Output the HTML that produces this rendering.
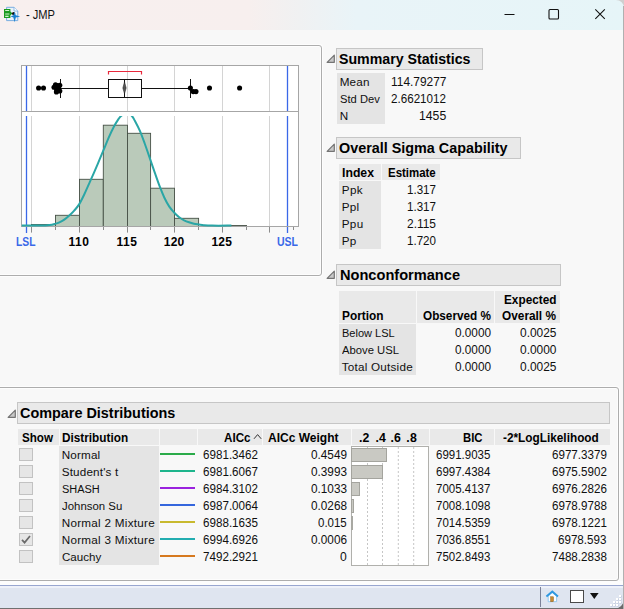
<!DOCTYPE html><html><head><meta charset="utf-8"><title>JMP</title><style>html,body{margin:0;padding:0}body{width:624px;height:609px;overflow:hidden;background:#f8f8f8;position:relative;font-family:"Liberation Sans",sans-serif}
.b{position:absolute;display:block}.t{position:absolute;white-space:nowrap;line-height:16px;transform-origin:left center}</style></head><body><div class="b" style="left:0px;top:0px;width:624px;height:30px;background:linear-gradient(90deg,#f8efee 0%,#f7efee 40%,#f0f1f2 48%,#e9f4f8 57%,#e6f5f8 100%);"></div><div class="b" style="left:-5px;top:45px;width:327px;height:231px;border:1px solid #adadad;box-sizing:border-box;border-radius:3px;box-shadow:0 0 0 1px #fdfdfd,inset 0 0 0 1px #fdfdfd;"></div><div class="b" style="left:-5px;top:387px;width:624px;height:194px;border:1px solid #adadad;box-sizing:border-box;border-radius:3px;box-shadow:0 0 0 1px #fdfdfd,inset 0 0 0 1px #fdfdfd;"></div><div class="b" style="left:336px;top:48px;width:147px;height:22px;background:#e9e9e9;border:1px solid #c6c6c6;box-sizing:border-box;"></div><div class="b" style="left:336px;top:137px;width:185px;height:22px;background:#e9e9e9;border:1px solid #c6c6c6;box-sizing:border-box;"></div><div class="b" style="left:336px;top:264px;width:225px;height:22px;background:#e9e9e9;border:1px solid #c6c6c6;box-sizing:border-box;"></div><div class="b" style="left:17px;top:402px;width:593.3px;height:22px;background:#e9e9e9;border:1px solid #c6c6c6;box-sizing:border-box;"></div><div class="b" style="left:337px;top:73px;width:48px;height:51px;background:#e4e4e4;"></div><div class="b" style="left:339px;top:164px;width:42px;height:16px;background:#e9e9e9;"></div><div class="b" style="left:382px;top:164px;width:58px;height:16px;background:#e9e9e9;"></div><div class="b" style="left:339px;top:181px;width:42px;height:68px;background:#e4e4e4;"></div><div class="b" style="left:339px;top:291px;width:76.5px;height:32px;background:#e9e9e9;"></div><div class="b" style="left:417px;top:291px;width:76.5px;height:32px;background:#e9e9e9;"></div><div class="b" style="left:495px;top:291px;width:64.5px;height:32px;background:#e9e9e9;"></div><div class="b" style="left:339px;top:324px;width:76.5px;height:51px;background:#e4e4e4;"></div><div class="b" style="left:18px;top:429px;width:41px;height:16px;background:#e9e9e9;"></div><div class="b" style="left:60px;top:429px;width:99px;height:16px;background:#e9e9e9;"></div><div class="b" style="left:160px;top:429px;width:37px;height:16px;background:#e9e9e9;"></div><div class="b" style="left:198px;top:429px;width:64px;height:16px;background:#e9e9e9;"></div><div class="b" style="left:263px;top:429px;width:88px;height:16px;background:#e9e9e9;"></div><div class="b" style="left:352px;top:429px;width:77px;height:16px;background:#e9e9e9;"></div><div class="b" style="left:430px;top:429px;width:63.5px;height:16px;background:#e9e9e9;"></div><div class="b" style="left:495px;top:429px;width:115px;height:16px;background:#e9e9e9;"></div><div class="b" style="left:59px;top:446px;width:100px;height:119px;background:#e4e4e4;"></div><svg class="b" style="left:253px;top:432px" width="10" height="10"><path d="M1 6.8 L4.6 2.6 L8.2 6.8" fill="none" stroke="#333" stroke-width="1"/></svg><div class="b" style="left:351px;top:446px;width:78px;height:119.5px;background:#fff;border:1px solid #b0b0ac;box-sizing:border-box;"></div><svg class="b" style="left:351px;top:447px" width="78" height="118"><path d="M16.5 0 V118" stroke="#c6c6c6" stroke-width="1" stroke-dasharray="2 2"/><path d="M31.5 0 V118" stroke="#c6c6c6" stroke-width="1" stroke-dasharray="2 2"/><path d="M47.3 0 V118" stroke="#c6c6c6" stroke-width="1" stroke-dasharray="2 2"/><path d="M62.7 0 V118" stroke="#c6c6c6" stroke-width="1" stroke-dasharray="2 2"/></svg><div class="b" style="left:19px;top:448.0px;width:14px;height:13px;background:#e6e6e6;border:1px solid #c2c2c2;box-sizing:border-box;"></div><div class="b" style="left:160px;top:453.3px;width:35px;height:2.2px;background:#2bab4a;"></div><div class="b" style="left:351px;top:448.0px;width:36.027300000000004px;height:13.5px;background:#c9c9c3;border:1px solid #a4a49e;box-sizing:border-box;"></div><div class="b" style="left:19px;top:465.0px;width:14px;height:13px;background:#e6e6e6;border:1px solid #c2c2c2;box-sizing:border-box;"></div><div class="b" style="left:160px;top:470.3px;width:35px;height:2.2px;background:#1eb58c;"></div><div class="b" style="left:351px;top:465.0px;width:31.7461px;height:13.5px;background:#c9c9c3;border:1px solid #a4a49e;box-sizing:border-box;"></div><div class="b" style="left:19px;top:482.0px;width:14px;height:13px;background:#e6e6e6;border:1px solid #c2c2c2;box-sizing:border-box;"></div><div class="b" style="left:160px;top:487.3px;width:35px;height:2.2px;background:#9a22de;"></div><div class="b" style="left:351px;top:482.0px;width:8.9541px;height:13.5px;background:#c9c9c3;border:1px solid #a4a49e;box-sizing:border-box;"></div><div class="b" style="left:19px;top:499.0px;width:14px;height:13px;background:#e6e6e6;border:1px solid #c2c2c2;box-sizing:border-box;"></div><div class="b" style="left:160px;top:504.3px;width:35px;height:2.2px;background:#3566dd;"></div><div class="b" style="left:351px;top:499.0px;width:3.0636px;height:13.5px;background:#c9c9c3;border:1px solid #a4a49e;box-sizing:border-box;"></div><div class="b" style="left:19px;top:516.0px;width:14px;height:13px;background:#e6e6e6;border:1px solid #c2c2c2;box-sizing:border-box;"></div><div class="b" style="left:160px;top:521.3px;width:35px;height:2.2px;background:#c8b92e;"></div><div class="b" style="left:351px;top:516.0px;width:1.955px;height:13.5px;background:#a8a8a2;"></div><div class="b" style="left:19px;top:533.0px;width:14px;height:13px;background:#e6e6e6;border:1px solid #c2c2c2;box-sizing:border-box;"></div><div class="b" style="left:160px;top:538.3px;width:35px;height:2.2px;background:#22adb0;"></div><div class="b" style="left:19px;top:550.0px;width:14px;height:13px;background:#e6e6e6;border:1px solid #c2c2c2;box-sizing:border-box;"></div><div class="b" style="left:160px;top:555.3px;width:35px;height:2.2px;background:#d6791f;"></div><svg class="b" style="left:19px;top:532.5px" width="14" height="13" viewBox="0 0 14 13"><path d="M3 6.8 L5.6 9.6 L11 3" fill="none" stroke="#6a6a6a" stroke-width="1.7"/></svg><div class="b" style="left:0px;top:581px;width:624px;height:4px;background:#fdfdfd;"></div><div class="b" style="left:0px;top:585px;width:624px;height:1px;background:#98a6d0;"></div><div class="b" style="left:0px;top:586px;width:624px;height:22px;background:#dfe5f0;"></div><div class="b" style="left:0px;top:586px;width:624px;height:1.5px;background:#eef1f9;"></div><div class="b" style="left:0px;top:608px;width:624px;height:1px;background:#707070;"></div><div class="b" style="left:540px;top:587px;width:1px;height:20px;background:#7c8298;"></div><div class="b" style="left:570px;top:590px;width:14px;height:13px;background:#fff;border:1px solid #4a4a4a;box-sizing:border-box;"></div><svg class="b" style="left:589px;top:592px" width="11" height="8"><path d="M1 1 H9.6 L5.3 7 Z" fill="#111"/></svg><svg class="b" style="left:544px;top:588px" width="17" height="16" viewBox="0 0 17 16">
<path d="M4.2 8 L8.2 4.6 L12.6 8 V13.7 H4.2 Z" fill="#fbfdff" stroke="#8cc4ec" stroke-width="0.9"/>
<path d="M2.4 8.4 L8.3 3.6 L14 8.4" fill="none" stroke="#2e98e0" stroke-width="1.9" stroke-linejoin="miter"/>
<rect x="6.7" y="8.8" width="2.7" height="4.9" fill="#c88a30" stroke="#8a5a14" stroke-width="0.5"/></svg><svg class="b" style="left:609px;top:594px" width="14" height="14"><rect x="10.6" y="1.6" width="2" height="2" fill="#bcc4d8"/><rect x="10" y="1" width="2" height="2" fill="#fff"/><rect x="7.6" y="4.6" width="2" height="2" fill="#bcc4d8"/><rect x="7" y="4" width="2" height="2" fill="#fff"/><rect x="10.6" y="4.6" width="2" height="2" fill="#bcc4d8"/><rect x="10" y="4" width="2" height="2" fill="#fff"/><rect x="4.6" y="7.6" width="2" height="2" fill="#bcc4d8"/><rect x="4" y="7" width="2" height="2" fill="#fff"/><rect x="7.6" y="7.6" width="2" height="2" fill="#bcc4d8"/><rect x="7" y="7" width="2" height="2" fill="#fff"/><rect x="10.6" y="7.6" width="2" height="2" fill="#bcc4d8"/><rect x="10" y="7" width="2" height="2" fill="#fff"/><rect x="1.6" y="10.6" width="2" height="2" fill="#bcc4d8"/><rect x="1" y="10" width="2" height="2" fill="#fff"/><rect x="4.6" y="10.6" width="2" height="2" fill="#bcc4d8"/><rect x="4" y="10" width="2" height="2" fill="#fff"/><rect x="7.6" y="10.6" width="2" height="2" fill="#bcc4d8"/><rect x="7" y="10" width="2" height="2" fill="#fff"/></svg><svg class="b" style="left:614px;top:599px" width="10" height="10"><path d="M10 0 V10 H0 A10 10 0 0 0 10 0 Z" fill="#6a6a6a"/></svg><svg class="b" style="left:325px;top:53px" width="11" height="11"><path d="M9.3 2.1 V9.3 H2.1 Z" fill="#c8c8c8" stroke="#747474" stroke-width="1.2" stroke-linejoin="round"/></svg><svg class="b" style="left:325px;top:142px" width="11" height="11"><path d="M9.3 2.1 V9.3 H2.1 Z" fill="#c8c8c8" stroke="#747474" stroke-width="1.2" stroke-linejoin="round"/></svg><svg class="b" style="left:325px;top:269px" width="11" height="11"><path d="M9.3 2.1 V9.3 H2.1 Z" fill="#c8c8c8" stroke="#747474" stroke-width="1.2" stroke-linejoin="round"/></svg><svg class="b" style="left:6px;top:407.7px" width="11" height="11"><path d="M9.3 2.1 V9.3 H2.1 Z" fill="#c8c8c8" stroke="#747474" stroke-width="1.2" stroke-linejoin="round"/></svg><svg class="b" style="left:500px;top:5px" width="112" height="20">
<path d="M4.5 9.5 H14.5" stroke="#111" stroke-width="1"/>
<rect x="49" y="4.5" width="9.5" height="9.5" rx="1" fill="none" stroke="#111" stroke-width="1.1"/>
<path d="M95.3 4.4 L104.8 13.9 M104.8 4.4 L95.3 13.9" stroke="#111" stroke-width="1.1"/></svg><svg class="b" style="left:612px;top:0" width="12" height="12"><path d="M12 0 H4 A8 8 0 0 1 12 8 Z" fill="#cfcfcf"/></svg><div class="b" style="left:623px;top:6px;width:1px;height:603px;background:#b0b0b0;"></div><svg class="b" style="left:0;top:0" width="24" height="24" viewBox="0 0 24 24">
<path d="M6.6 7.3 H14 L17.8 11 V20.6 H6.6 Z" fill="#eaf2fa" stroke="#7aaee0" stroke-width="1"/>
<path d="M14 7.3 V11 H17.8" fill="#fafcff" stroke="#7aaee0" stroke-width="0.8"/>
<path d="M4 9 H10.4 V11.6 L12.6 13.4 L10.4 15.3 V17.9 H4 Z" fill="#1a9a1e"/>
<path d="M5.2 10.5 H9.2 M5.2 14 H9.4 M5.2 16.4 H8.6" stroke="#d4f2cc" stroke-width="1.1"/>
<circle cx="13.5" cy="13.5" r="1.6" fill="#111"/>
<path d="M14.6 12 L15.8 15.2 L20.2 16.4 L15.8 17.6 L14.6 22.2 L13.4 17.6 L10.6 16.4 L13.4 15.2 Z" fill="#1a80d0"/></svg><svg class="b" style="left:0;top:0" width="330" height="260" viewBox="0 0 330 260"><rect x="21.5" y="65.5" width="277" height="161" fill="#fff" stroke="#a6a6a6" stroke-width="1"/><path d="M31.5 66 V111 M31.5 116 V226" stroke="#d4d4d4" stroke-width="1"/><path d="M79.5 66 V111 M79.5 116 V226" stroke="#d4d4d4" stroke-width="1"/><path d="M127.5 66 V111 M127.5 116 V226" stroke="#d4d4d4" stroke-width="1"/><path d="M174.5 66 V111 M174.5 116 V226" stroke="#d4d4d4" stroke-width="1"/><path d="M222.5 66 V111 M222.5 116 V226" stroke="#d4d4d4" stroke-width="1"/><path d="M269.5 66 V111 M269.5 116 V226" stroke="#d4d4d4" stroke-width="1"/><path d="M21 111.5 H299" stroke="#a6a6a6" stroke-width="1"/><path d="M26.5 66 V111 M26.5 116 V233" stroke="#3a68e8" stroke-width="1.3"/><path d="M287.5 66 V111 M287.5 116 V233" stroke="#3a68e8" stroke-width="1.3"/><rect x="31.5" y="224.5" width="24.0" height="2.0" fill="#bacaba" stroke="#465046" stroke-width="0.9"/><rect x="55.5" y="215.3" width="24.0" height="11.199999999999989" fill="#bacaba" stroke="#465046" stroke-width="0.9"/><rect x="79.5" y="179.3" width="23.799999999999997" height="47.19999999999999" fill="#bacaba" stroke="#465046" stroke-width="0.9"/><rect x="103.3" y="125.2" width="24.200000000000003" height="101.3" fill="#bacaba" stroke="#465046" stroke-width="0.9"/><rect x="127.5" y="133.3" width="23.099999999999994" height="93.19999999999999" fill="#bacaba" stroke="#465046" stroke-width="0.9"/><rect x="150.6" y="188.2" width="23.900000000000006" height="38.30000000000001" fill="#bacaba" stroke="#465046" stroke-width="0.9"/><rect x="174.5" y="218.3" width="24.099999999999994" height="8.199999999999989" fill="#bacaba" stroke="#465046" stroke-width="0.9"/><rect x="222.5" y="225.5" width="24.0" height="1.0" fill="#bacaba" stroke="#465046" stroke-width="0.9"/><path d="M21 226.5 H299" stroke="#a6a6a6" stroke-width="1"/><path d="M31.5 227 V232.6" stroke="#8c8c8c" stroke-width="1"/><path d="M79.5 227 V232.6" stroke="#8c8c8c" stroke-width="1"/><path d="M127.5 227 V232.6" stroke="#8c8c8c" stroke-width="1"/><path d="M174.5 227 V232.6" stroke="#8c8c8c" stroke-width="1"/><path d="M222.5 227 V232.6" stroke="#8c8c8c" stroke-width="1"/><path d="M269.5 227 V232.6" stroke="#8c8c8c" stroke-width="1"/><path d="M55.5 227 V230" stroke="#8c8c8c" stroke-width="1"/><path d="M103.5 227 V230" stroke="#8c8c8c" stroke-width="1"/><path d="M150.5 227 V230" stroke="#8c8c8c" stroke-width="1"/><path d="M198.5 227 V230" stroke="#8c8c8c" stroke-width="1"/><path d="M246.5 227 V230" stroke="#8c8c8c" stroke-width="1"/><path d="M293.5 227 V230" stroke="#8c8c8c" stroke-width="1"/><clipPath id="cp"><rect x="21.5" y="116" width="277.5" height="112"/></clipPath><path clip-path="url(#cp)" d="M21.5 225.6 C23.75 225.60 31.08 225.62 35 225.6 C38.92 225.58 42.57 225.58 45 225.5 C47.43 225.42 48.02 225.35 49.6 225.1 C51.18 224.85 52.87 224.45 54.5 224.0 C56.13 223.55 57.77 223.13 59.4 222.4 C61.03 221.67 62.65 220.75 64.3 219.6 C65.95 218.45 67.65 217.00 69.3 215.5 C70.95 214.00 72.57 212.45 74.2 210.6 C75.83 208.75 77.47 207.00 79.1 204.4 C80.73 201.80 82.35 198.42 84 195.0 C85.65 191.58 87.35 187.60 89 183.9 C90.65 180.20 92.25 176.58 93.9 172.8 C95.55 169.02 97.25 165.10 98.9 161.2 C100.55 157.30 102.17 153.33 103.8 149.4 C105.43 145.47 107.07 141.30 108.7 137.6 C110.33 133.90 111.95 130.32 113.6 127.2 C115.25 124.08 117.35 120.77 118.6 118.9 C119.85 117.03 119.78 117.05 121.1 116.0 C122.42 114.95 124.70 112.60 126.5 112.6 C128.30 112.60 130.51 114.63 131.9 116.0 C133.29 117.37 133.53 118.35 134.85 120.8 C136.17 123.25 138.16 126.92 139.8 130.7 C141.44 134.48 142.97 138.73 144.7 143.5 C146.43 148.27 148.55 154.53 150.2 159.3 C151.85 164.07 153.05 167.67 154.6 172.1 C156.15 176.53 157.87 181.63 159.5 185.9 C161.13 190.17 162.77 194.25 164.4 197.7 C166.03 201.15 167.65 204.10 169.3 206.6 C170.95 209.10 172.65 210.92 174.3 212.7 C175.95 214.48 177.57 216.03 179.2 217.3 C180.83 218.57 182.47 219.47 184.1 220.3 C185.73 221.13 187.35 221.73 189 222.3 C190.65 222.87 192.35 223.33 194 223.7 C195.65 224.07 197.27 224.25 198.9 224.5 C200.53 224.75 201.62 225.02 203.8 225.2 C205.98 225.38 207.40 225.53 212 225.6 C216.60 225.67 228.17 225.60 231.4 225.6" fill="none" stroke="#2aa6a6" stroke-width="2" stroke-linejoin="round"/><path d="M60.5 88.5 H108.5 M141.5 88.5 H190.5 M60.5 79 V98 M190.5 79 V98" stroke="#111" stroke-width="1"/><rect x="108.5" y="79.5" width="33" height="18" fill="none" stroke="#111" stroke-width="1"/><path d="M124.5 79.5 V97.5" stroke="#111" stroke-width="1"/><path d="M124.5 81.8 L126.2 88 L124.5 93.8 L122.8 88 Z" fill="#555" stroke="#222" stroke-width="0.5"/><path d="M108.5 74.5 V71.5 H141.5 V74.5" fill="none" stroke="#e8283c" stroke-width="1.2"/><circle cx="38.6" cy="88" r="2.55" fill="#000"/><circle cx="43.5" cy="88" r="2.55" fill="#000"/><circle cx="55.5" cy="84.8" r="2.55" fill="#000"/><circle cx="54" cy="87.2" r="2.55" fill="#000"/><circle cx="56.4" cy="92" r="2.55" fill="#000"/><circle cx="59.8" cy="85.2" r="2.55" fill="#000"/><circle cx="59.8" cy="91" r="2.55" fill="#000"/><circle cx="57.6" cy="88" r="2.55" fill="#000"/><circle cx="57" cy="85.6" r="2.55" fill="#000"/><circle cx="56.6" cy="90" r="2.55" fill="#000"/><circle cx="58.6" cy="88.4" r="2.55" fill="#000"/><circle cx="190.4" cy="88" r="2.55" fill="#000"/><circle cx="193.2" cy="91.6" r="2.55" fill="#000"/><circle cx="196" cy="91.6" r="2.55" fill="#000"/><circle cx="209.5" cy="88" r="2.55" fill="#000"/><circle cx="239.6" cy="88" r="2.55" fill="#000"/></svg><span class="t" style="left:26.20px;top:6.74px;font-size:12.3px;font-weight:400;color:#111;letter-spacing:0.000px;transform:scaleX(0.9032);">- JMP</span><span class="t" style="left:338.70px;top:50.98px;font-size:15.4px;font-weight:700;color:#000;letter-spacing:0.000px;transform:scaleX(0.9205);">Summary Statistics</span><span class="t" style="left:338.70px;top:139.98px;font-size:15.4px;font-weight:700;color:#000;letter-spacing:0.000px;transform:scaleX(0.9336);">Overall Sigma Capability</span><span class="t" style="left:339.70px;top:266.98px;font-size:15.4px;font-weight:700;color:#000;letter-spacing:0.000px;transform:scaleX(0.9481);">Nonconformance</span><span class="t" style="left:19.90px;top:404.98px;font-size:15.4px;font-weight:700;color:#000;letter-spacing:0.000px;transform:scaleX(0.9361);">Compare Distributions</span><span class="t" style="left:339.70px;top:73.88px;font-size:11.7px;font-weight:400;color:#101010;letter-spacing:0.167px;transform:scaleX(1.0000);">Mean</span><span class="t" style="left:390.95px;top:73.89px;font-size:12.3px;font-weight:400;color:#101010;letter-spacing:0.000px;transform:scaleX(0.9700);">114.79277</span><span class="t" style="left:339.70px;top:90.88px;font-size:11.7px;font-weight:400;color:#101010;letter-spacing:0.000px;transform:scaleX(0.9560);">Std Dev</span><span class="t" style="left:391.45px;top:90.89px;font-size:12.3px;font-weight:400;color:#101010;letter-spacing:0.000px;transform:scaleX(0.9460);">2.6621012</span><span class="t" style="left:339.70px;top:107.88px;font-size:11.7px;font-weight:400;color:#101010;letter-spacing:0.000px;transform:scaleX(1.0000);">N</span><span class="t" style="left:419.20px;top:107.89px;font-size:12.3px;font-weight:400;color:#101010;letter-spacing:0.000px;transform:scaleX(0.9960);">1455</span><span class="t" style="left:341.70px;top:165.14px;font-size:12.3px;font-weight:700;color:#000;letter-spacing:0.000px;transform:scaleX(0.9961);">Index</span><span class="t" style="left:387.95px;top:165.14px;font-size:12.3px;font-weight:700;color:#000;letter-spacing:0.000px;transform:scaleX(0.9314);">Estimate</span><span class="t" style="left:341.70px;top:181.73px;font-size:11.7px;font-weight:400;color:#101010;letter-spacing:0.430px;transform:scaleX(1.0000);">Ppk</span><span class="t" style="left:407.20px;top:181.74px;font-size:12.3px;font-weight:400;color:#101010;letter-spacing:0.000px;transform:scaleX(0.9421);">1.317</span><span class="t" style="left:341.70px;top:198.73px;font-size:11.7px;font-weight:400;color:#101010;letter-spacing:0.297px;transform:scaleX(1.0000);">Ppl</span><span class="t" style="left:407.20px;top:198.74px;font-size:12.3px;font-weight:400;color:#101010;letter-spacing:0.000px;transform:scaleX(0.9421);">1.317</span><span class="t" style="left:341.70px;top:215.73px;font-size:11.7px;font-weight:400;color:#101010;letter-spacing:0.352px;transform:scaleX(1.0000);">Ppu</span><span class="t" style="left:407.20px;top:215.74px;font-size:12.3px;font-weight:400;color:#101010;letter-spacing:0.000px;transform:scaleX(0.9712);">2.115</span><span class="t" style="left:341.70px;top:232.73px;font-size:11.7px;font-weight:400;color:#101010;letter-spacing:0.203px;transform:scaleX(1.0000);">Pp</span><span class="t" style="left:407.20px;top:232.74px;font-size:12.3px;font-weight:400;color:#101010;letter-spacing:0.000px;transform:scaleX(0.9421);">1.720</span><span class="t" style="left:341.70px;top:307.84px;font-size:12.3px;font-weight:700;color:#000;letter-spacing:0.000px;transform:scaleX(0.9641);">Portion</span><span class="t" style="left:422.70px;top:307.84px;font-size:12.3px;font-weight:700;color:#000;letter-spacing:0.000px;transform:scaleX(0.9565);">Observed %</span><span class="t" style="left:503.70px;top:292.14px;font-size:12.3px;font-weight:700;color:#000;letter-spacing:0.000px;transform:scaleX(0.9600);">Expected</span><span class="t" style="left:502.20px;top:307.84px;font-size:12.3px;font-weight:700;color:#000;letter-spacing:0.000px;transform:scaleX(0.9632);">Overall %</span><span class="t" style="left:341.70px;top:324.63px;font-size:11.7px;font-weight:400;color:#101010;letter-spacing:0.000px;transform:scaleX(0.9438);">Below LSL</span><span class="t" style="left:454.70px;top:324.64px;font-size:12.3px;font-weight:400;color:#101010;letter-spacing:0.000px;transform:scaleX(0.9568);">0.0000</span><span class="t" style="left:519.70px;top:324.64px;font-size:12.3px;font-weight:400;color:#101010;letter-spacing:0.000px;transform:scaleX(0.9701);">0.0025</span><span class="t" style="left:341.70px;top:341.63px;font-size:11.7px;font-weight:400;color:#101010;letter-spacing:0.000px;transform:scaleX(0.9641);">Above USL</span><span class="t" style="left:454.70px;top:341.64px;font-size:12.3px;font-weight:400;color:#101010;letter-spacing:0.000px;transform:scaleX(0.9568);">0.0000</span><span class="t" style="left:519.70px;top:341.64px;font-size:12.3px;font-weight:400;color:#101010;letter-spacing:0.000px;transform:scaleX(0.9701);">0.0000</span><span class="t" style="left:341.70px;top:358.63px;font-size:11.7px;font-weight:400;color:#101010;letter-spacing:0.232px;transform:scaleX(1.0000);">Total Outside</span><span class="t" style="left:454.70px;top:358.64px;font-size:12.3px;font-weight:400;color:#101010;letter-spacing:0.000px;transform:scaleX(0.9568);">0.0000</span><span class="t" style="left:519.70px;top:358.64px;font-size:12.3px;font-weight:400;color:#101010;letter-spacing:0.000px;transform:scaleX(0.9701);">0.0025</span><span class="t" style="left:21.50px;top:429.74px;font-size:12.3px;font-weight:700;color:#000;letter-spacing:0.000px;transform:scaleX(0.9452);">Show</span><span class="t" style="left:61.80px;top:429.74px;font-size:12.3px;font-weight:700;color:#000;letter-spacing:0.000px;transform:scaleX(0.9580);">Distribution</span><span class="t" style="left:224.20px;top:429.74px;font-size:12.3px;font-weight:700;color:#000;letter-spacing:0.000px;transform:scaleX(0.9454);">AICc</span><span class="t" style="left:268.45px;top:429.74px;font-size:12.3px;font-weight:700;color:#000;letter-spacing:0.000px;transform:scaleX(0.9764);">AICc Weight</span><span class="t" style="left:359.20px;top:429.74px;font-size:12.3px;font-weight:700;color:#000;letter-spacing:0.000px;transform:scaleX(0.9985);">.2</span><span class="t" style="left:375.45px;top:429.74px;font-size:12.3px;font-weight:700;color:#000;letter-spacing:0.234px;transform:scaleX(1.0000);">.4</span><span class="t" style="left:390.45px;top:429.74px;font-size:12.3px;font-weight:700;color:#000;letter-spacing:0.234px;transform:scaleX(1.0000);">.6</span><span class="t" style="left:406.20px;top:429.74px;font-size:12.3px;font-weight:700;color:#000;letter-spacing:0.484px;transform:scaleX(1.0000);">.8</span><span class="t" style="left:462.70px;top:429.74px;font-size:12.3px;font-weight:700;color:#000;letter-spacing:0.000px;transform:scaleX(0.9204);">BIC</span><span class="t" style="left:502.60px;top:429.74px;font-size:12.3px;font-weight:700;color:#000;letter-spacing:0.000px;transform:scaleX(0.9604);">-2*LogLikelihood</span><span class="t" style="left:61.70px;top:446.63px;font-size:11.7px;font-weight:400;color:#101010;letter-spacing:0.166px;transform:scaleX(1.0000);">Normal</span><span class="t" style="left:203.45px;top:446.64px;font-size:12.3px;font-weight:400;color:#101010;letter-spacing:0.000px;transform:scaleX(0.9460);">6981.3462</span><span class="t" style="left:311.20px;top:446.64px;font-size:12.3px;font-weight:400;color:#101010;letter-spacing:0.000px;transform:scaleX(0.9568);">0.4549</span><span class="t" style="left:435.50px;top:446.64px;font-size:12.3px;font-weight:400;color:#101010;letter-spacing:0.000px;transform:scaleX(0.9339);">6991.9035</span><span class="t" style="left:551.60px;top:446.64px;font-size:12.3px;font-weight:400;color:#101010;letter-spacing:0.000px;transform:scaleX(0.9443);">6977.3379</span><span class="t" style="left:61.70px;top:463.63px;font-size:11.7px;font-weight:400;color:#101010;letter-spacing:0.164px;transform:scaleX(1.0000);">Student's t</span><span class="t" style="left:203.45px;top:463.64px;font-size:12.3px;font-weight:400;color:#101010;letter-spacing:0.000px;transform:scaleX(0.9460);">6981.6067</span><span class="t" style="left:311.20px;top:463.64px;font-size:12.3px;font-weight:400;color:#101010;letter-spacing:0.000px;transform:scaleX(0.9568);">0.3993</span><span class="t" style="left:435.50px;top:463.64px;font-size:12.3px;font-weight:400;color:#101010;letter-spacing:0.000px;transform:scaleX(0.9339);">6997.4384</span><span class="t" style="left:551.60px;top:463.64px;font-size:12.3px;font-weight:400;color:#101010;letter-spacing:0.000px;transform:scaleX(0.9443);">6975.5902</span><span class="t" style="left:61.70px;top:480.63px;font-size:11.7px;font-weight:400;color:#101010;letter-spacing:0.000px;transform:scaleX(0.9372);">SHASH</span><span class="t" style="left:203.45px;top:480.64px;font-size:12.3px;font-weight:400;color:#101010;letter-spacing:0.000px;transform:scaleX(0.9460);">6984.3102</span><span class="t" style="left:311.20px;top:480.64px;font-size:12.3px;font-weight:400;color:#101010;letter-spacing:0.000px;transform:scaleX(0.9568);">0.1033</span><span class="t" style="left:435.50px;top:480.64px;font-size:12.3px;font-weight:400;color:#101010;letter-spacing:0.000px;transform:scaleX(0.9339);">7005.4137</span><span class="t" style="left:551.60px;top:480.64px;font-size:12.3px;font-weight:400;color:#101010;letter-spacing:0.000px;transform:scaleX(0.9443);">6976.2826</span><span class="t" style="left:61.70px;top:497.63px;font-size:11.7px;font-weight:400;color:#101010;letter-spacing:0.000px;transform:scaleX(0.9760);">Johnson Su</span><span class="t" style="left:203.45px;top:497.64px;font-size:12.3px;font-weight:400;color:#101010;letter-spacing:0.000px;transform:scaleX(0.9460);">6987.0064</span><span class="t" style="left:311.20px;top:497.64px;font-size:12.3px;font-weight:400;color:#101010;letter-spacing:0.000px;transform:scaleX(0.9568);">0.0268</span><span class="t" style="left:435.50px;top:497.64px;font-size:12.3px;font-weight:400;color:#101010;letter-spacing:0.000px;transform:scaleX(0.9339);">7008.1098</span><span class="t" style="left:551.60px;top:497.64px;font-size:12.3px;font-weight:400;color:#101010;letter-spacing:0.000px;transform:scaleX(0.9443);">6978.9788</span><span class="t" style="left:61.70px;top:514.63px;font-size:11.7px;font-weight:400;color:#101010;letter-spacing:0.268px;transform:scaleX(1.0000);">Normal 2 Mixture</span><span class="t" style="left:203.45px;top:514.64px;font-size:12.3px;font-weight:400;color:#101010;letter-spacing:0.000px;transform:scaleX(0.9460);">6988.1635</span><span class="t" style="left:318.45px;top:514.64px;font-size:12.3px;font-weight:400;color:#101010;letter-spacing:0.000px;transform:scaleX(0.9340);">0.015</span><span class="t" style="left:435.50px;top:514.64px;font-size:12.3px;font-weight:400;color:#101010;letter-spacing:0.000px;transform:scaleX(0.9339);">7014.5359</span><span class="t" style="left:551.60px;top:514.64px;font-size:12.3px;font-weight:400;color:#101010;letter-spacing:0.000px;transform:scaleX(0.9443);">6978.1221</span><span class="t" style="left:61.70px;top:531.63px;font-size:11.7px;font-weight:400;color:#101010;letter-spacing:0.268px;transform:scaleX(1.0000);">Normal 3 Mixture</span><span class="t" style="left:203.45px;top:531.64px;font-size:12.3px;font-weight:400;color:#101010;letter-spacing:0.000px;transform:scaleX(0.9460);">6994.6926</span><span class="t" style="left:311.20px;top:531.64px;font-size:12.3px;font-weight:400;color:#101010;letter-spacing:0.000px;transform:scaleX(0.9568);">0.0006</span><span class="t" style="left:435.50px;top:531.64px;font-size:12.3px;font-weight:400;color:#101010;letter-spacing:0.000px;transform:scaleX(0.9339);">7036.8551</span><span class="t" style="left:558.10px;top:531.64px;font-size:12.3px;font-weight:400;color:#101010;letter-spacing:0.000px;transform:scaleX(0.9435);">6978.593</span><span class="t" style="left:61.70px;top:548.63px;font-size:11.7px;font-weight:400;color:#101010;letter-spacing:0.000px;transform:scaleX(0.9901);">Cauchy</span><span class="t" style="left:203.45px;top:548.64px;font-size:12.3px;font-weight:400;color:#101010;letter-spacing:0.000px;transform:scaleX(0.9460);">7492.2921</span><span class="t" style="left:340.45px;top:548.64px;font-size:12.3px;font-weight:400;color:#101010;letter-spacing:0.000px;transform:scaleX(0.9863);">0</span><span class="t" style="left:435.50px;top:548.64px;font-size:12.3px;font-weight:400;color:#101010;letter-spacing:0.000px;transform:scaleX(0.9339);">7502.8493</span><span class="t" style="left:551.60px;top:548.64px;font-size:12.3px;font-weight:400;color:#101010;letter-spacing:0.000px;transform:scaleX(0.9443);">7488.2838</span><span class="t" style="left:15.95px;top:233.84px;font-size:12px;font-weight:700;color:#3a68e8;letter-spacing:0.000px;transform:scaleX(0.8601);">LSL</span><span class="t" style="left:68.45px;top:233.84px;font-size:12px;font-weight:700;color:#000;letter-spacing:0.570px;transform:scaleX(1.0000);">110</span><span class="t" style="left:116.45px;top:233.84px;font-size:12px;font-weight:700;color:#000;letter-spacing:0.570px;transform:scaleX(1.0000);">115</span><span class="t" style="left:163.75px;top:233.84px;font-size:12px;font-weight:700;color:#000;letter-spacing:0.234px;transform:scaleX(1.0000);">120</span><span class="t" style="left:211.45px;top:233.84px;font-size:12px;font-weight:700;color:#000;letter-spacing:0.234px;transform:scaleX(1.0000);">125</span><span class="t" style="left:276.50px;top:233.84px;font-size:12px;font-weight:700;color:#3a68e8;letter-spacing:0.000px;transform:scaleX(0.8750);">USL</span></body></html>
